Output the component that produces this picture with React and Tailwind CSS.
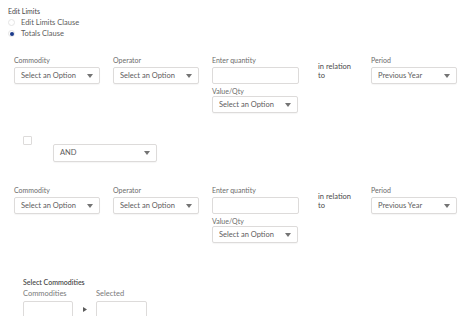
import React from "react";

const Caret = () => (
  <svg width="6" height="4" viewBox="0 0 6 4" className="shrink-0">
    <path d="M0 0 L6 0 L3 4 Z" fill="#747474" />
  </svg>
);

const Select = ({ value = "Select an Option", width = "w-[86px]", height = "h-[17px]" }) => (
  <div
    className={`${width} ${height} flex items-center justify-between rounded-[2px] border border-[#dddbda] bg-white pl-[6px] pr-[6px] text-[7.5px] text-[#5c5c5c] shadow-[0_1px_1px_rgba(0,0,0,0.04)]`}
  >
    <span>{value}</span>
    <Caret />
  </div>
);

const Label = ({ children, className = "" }) => (
  <div className={`h-[10px] text-[7px] leading-[10px] text-[#6b6b6b] ${className}`}>{children}</div>
);

const Field = ({ label, value, className = "" }) => (
  <div className={`w-[86px] ${className}`}>
    <Label className="mb-[2px]">{label}</Label>
    <Select value={value} />
  </div>
);

const LimitRow = () => (
  <div className="flex items-start pl-[14px]">
    <Field label="Commodity" />
    <Field label="Operator" className="ml-[13px]" />
    <div className="ml-[13px] w-[87px]">
      <Label className="mb-[2px]">Enter quantity</Label>
      <div className="h-[17px] w-[87px] rounded-[2px] border border-[#dddbda] bg-white" />
      <Label className="mt-[2px]">Value/Qty</Label>
      <Select />
    </div>
    <div className="ml-[19px] w-[53px] pt-[7px] text-[7.5px] leading-[9px] text-[#4a4a4a]">
      in relation
      <br />
      to
    </div>
    <Field label="Period" value="Previous Year" />
  </div>
);

export default function App() {
  return (
    <div className="h-[316px] w-[474px] overflow-hidden bg-white font-['Lato',sans-serif]">
      {/* edit limits radios */}
      <div className="pl-[8px] pt-[6px]">
        <div className="h-[10px] text-[7px] leading-[10px] text-[#4a4a4a]">Edit Limits</div>
        <div className="mt-[1px] flex h-[11px] items-center">
          <span className="h-[7px] w-[7px] rounded-full border border-[#e5e5e5] bg-white" />
          <span className="ml-[6px] text-[7.5px] text-[#5c5c5c]">Edit Limits Clause</span>
        </div>
        <div className="flex h-[11px] items-center">
          <span className="flex h-[7px] w-[7px] items-center justify-center rounded-full border border-[#e5e5e5] bg-white">
            <span className="h-[4px] w-[4px] rounded-full bg-[#1b3a8c]" />
          </span>
          <span className="ml-[6px] text-[7.5px] text-[#5c5c5c]">Totals Clause</span>
        </div>
      </div>

      <div className="mt-[16px]">
        <LimitRow />
      </div>

      {/* checkbox + AND */}
      <div className="pl-[23px] pt-[23px]">
        <div className="h-[9px] w-[9px] rounded-[1px] border border-[#dddbda] bg-white" />
      </div>
      <div className="-mt-px pl-[53px]">
        <Select value="AND" width="w-[104px]" height="h-[18px]" />
      </div>

      <div className="mt-[23px]">
        <LimitRow />
      </div>

      {/* select commodities */}
      <div className="mt-[34px] pl-[23px]">
        <div className="h-[10px] text-[7px] font-semibold leading-[10px] text-[#4a4a4a]">
          Select Commodities
        </div>
        <div className="mt-[2px] flex items-start">
          <div className="w-[50px]">
            <div className="h-[10px] text-[7.5px] leading-[10px] text-[#7a7a7a]">Commodities</div>
            <div className="mt-[2px] h-[40px] w-[50px] rounded-[2px] border border-[#dddbda] bg-white" />
          </div>
          <div className="flex w-[23px] justify-center pt-[18px]">
            <svg width="4" height="5" viewBox="0 0 4 5">
              <path d="M0 0 L4 2.5 L0 5 Z" fill="#5c5c5c" />
            </svg>
          </div>
          <div className="w-[51px]">
            <div className="h-[10px] text-[7.5px] leading-[10px] text-[#7a7a7a]">Selected</div>
            <div className="mt-[2px] h-[40px] w-[51px] rounded-[2px] border border-[#dddbda] bg-white" />
          </div>
        </div>
      </div>
    </div>
  );
}
